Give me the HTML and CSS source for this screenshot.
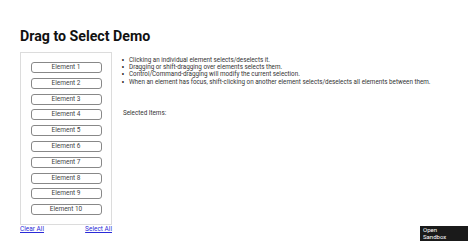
FILE: index.html
```html
<!DOCTYPE html>
<html>
<head>
<meta charset="utf-8">
<link rel="stylesheet" href="styles.css">
</head>
<body>
<div class="page">
  <h1 class="title">Drag to Select Demo</h1>
  <div class="main">
    <div class="left">
      <div class="box">
        <div class="item">Element 1</div>
        <div class="item">Element 2</div>
        <div class="item">Element 3</div>
        <div class="item">Element 4</div>
        <div class="item">Element 5</div>
        <div class="item">Element 6</div>
        <div class="item">Element 7</div>
        <div class="item">Element 8</div>
        <div class="item">Element 9</div>
        <div class="item">Element 10</div>
      </div>
      <div class="links">
        <a href="#" class="link">Clear All</a>
        <a href="#" class="link">Select All</a>
      </div>
    </div>
    <div class="right">
      <ul class="info">
        <li>Clicking an individual element selects/deselects it.</li>
        <li>Dragging or shift-dragging over elements selects them.</li>
        <li>Control/Command-dragging will modify the current selection.</li>
        <li>When an element has focus, shift-clicking on another element selects/deselects all elements between them.</li>
      </ul>
      <div class="selected">Selected Items:</div>
    </div>
  </div>
</div>
<div class="sandbox">Open<br>Sandbox</div>
</body>
</html>
```
FILE: styles.css
```css
html, body {
  margin: 0;
  padding: 0;
  background: #fff;
}
body {
  font-family: Roboto, "Liberation Sans", sans-serif;
  color: #333;
}
.page {
  padding: 27px 20px 0 20px;
}
.title {
  font-size: 14.2px;
  font-weight: 700;
  line-height: 18px;
  margin: 0 0 7px 0;
  color: #111;
}
.main {
  display: flex;
  gap: 6px;
}
.left {
  width: 92px;
  display: flex;
  flex-direction: column;
}
.box {
  border: 1px solid #dcdcdc;
  height: 162px;
  padding-top: 9px;
  display: flex;
  flex-direction: column;
  align-items: center;
  gap: 4.8px;
  box-sizing: content-box;
}
.item {
  width: 69px;
  height: 9px;
  border: 1px solid #888;
  border-radius: 3px;
  font-size: 6.5px;
  line-height: 9px;
  text-align: center;
  color: #444;
}
.links {
  display: flex;
  justify-content: space-between;
  font-size: 6.5px;
  line-height: 9px;
}
.link {
  color: #2a2ad8;
  text-decoration: underline;
}
.right {
  padding-top: 5px;
  flex: 1;
}
.info {
  margin: 0;
  padding: 0 0 0 3.5px;
  list-style: none;
  font-size: 6.3px;
  line-height: 7.2px;
  color: #333;
}
.info li::before {
  content: "\2022";
  display: inline-block;
  width: 7.5px;
  font-size: 8.5px;
  line-height: 7px;
  vertical-align: top;
  color: #222;
}
.selected {
  margin-top: 23px;
  padding-left: 5px;
  font-size: 6.3px;
  line-height: 8px;
  color: #333;
}
.sandbox {
  position: fixed;
  right: 6px;
  bottom: 7px;
  width: 42px;
  padding: 1px 3px;
  background: #1a1a1a;
  color: #fff;
  font-size: 6px;
  line-height: 6.3px;
}
```
